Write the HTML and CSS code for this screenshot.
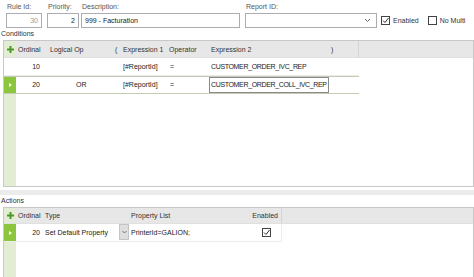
FILE: index.html
```html
<!DOCTYPE html>
<html lang="en">
<head>
  <meta charset="UTF-8">
  <title>Rule Editor</title>
  <link rel="stylesheet" href="styles.css">
</head>
<body>

<div class="top">
  <div class="field rule">
    <label>Rule Id:</label>
    <div class="box num dim">30</div>
  </div>
  <div class="field prio">
    <label>Priority:</label>
    <div class="box num">2</div>
  </div>
  <div class="field desc">
    <label>Description:</label>
    <div class="box">999 - Facturation</div>
  </div>
  <div class="field report">
    <label>Report ID:</label>
    <div class="box combo">
      <svg class="chev" width="7" height="5" viewBox="0 0 7 5"><path d="M1 1 L3.5 3.5 L6 1" fill="none" stroke="#666" stroke-width="1"/></svg>
    </div>
  </div>
  <div class="check">
    <span class="cb">
      <svg width="7" height="7" viewBox="0 0 7 7"><path d="M1 3.5 L3 5.5 L6.5 1" fill="none" stroke="#333" stroke-width="1"/></svg>
    </span>
    Enabled
  </div>
  <div class="check nomulti">
    <span class="cb"></span>
    No Multi
  </div>
</div>

<div class="section-label">Conditions</div>

<div class="grid cond">
  <div class="row head">
    <div class="ind">
      <svg class="plus" width="7" height="7" viewBox="0 0 7 7"><path d="M3.5 0 V7 M0 3.5 H7" stroke="#4b9a2b" stroke-width="2"/></svg>
    </div>
    <div class="c-ord">Ordinal</div>
    <div class="c-log">Logical Op</div>
    <div class="c-par">(</div>
    <div class="c-ex1">Expression 1</div>
    <div class="c-op">Operator</div>
    <div class="c-ex2">Expression 2</div>
    <div class="c-cls">)</div>
    <div class="c-rest"></div>
  </div>
  <div class="row">
    <div class="ind"></div>
    <div class="c-ord num">10</div>
    <div class="c-log"></div>
    <div class="c-par"></div>
    <div class="c-ex1">[#ReportId]</div>
    <div class="c-op">=</div>
    <div class="c-ex2 caps">CUSTOMER_ORDER_IVC_REP</div>
    <div class="c-cls"></div>
  </div>
  <div class="row sel">
    <div class="ind"><span class="arrow"></span></div>
    <div class="c-ord num">20</div>
    <div class="c-log or">OR</div>
    <div class="c-par"></div>
    <div class="c-ex1">[#ReportId]</div>
    <div class="c-op">=</div>
    <div class="c-ex2"><span class="editor caps">CUSTOMER_ORDER_COLL_IVC_REP</span></div>
    <div class="c-cls"></div>
  </div>
</div>

<div class="splitter"></div>
<div class="section-label actions-label">Actions</div>

<div class="grid act">
  <div class="row head">
    <div class="ind">
      <svg class="plus" width="7" height="7" viewBox="0 0 7 7"><path d="M3.5 0 V7 M0 3.5 H7" stroke="#4b9a2b" stroke-width="2"/></svg>
    </div>
    <div class="c-ord">Ordinal</div>
    <div class="c-type">Type</div>
    <div class="c-prop">Property List</div>
    <div class="c-en">Enabled</div>
    <div class="c-rest"></div>
  </div>
  <div class="row sel">
    <div class="ind"><span class="arrow"></span></div>
    <div class="c-ord num">20</div>
    <div class="c-type">
      <span>Set Default Property</span>
      <span class="drop">
        <svg width="5" height="4" viewBox="0 0 5 4"><path d="M0.5 1 L2.5 3 L4.5 1" fill="none" stroke="#666" stroke-width="0.9"/></svg>
      </span>
    </div>
    <div class="c-prop">PrinterId=GALION;</div>
    <div class="c-en">
      <span class="cb">
        <svg width="7" height="7" viewBox="0 0 7 7"><path d="M1 3.5 L3 5.5 L6.5 1" fill="none" stroke="#333" stroke-width="1"/></svg>
      </span>
    </div>
  </div>
</div>

</body>
</html>
```

FILE: styles.css
```css
* {
  box-sizing: border-box;
}

body {
  margin: 0;
  width: 474px;
  height: 277px;
  overflow: hidden;
  background: #fff;
  font-family: 'Liberation Sans', Arial, sans-serif;
  font-size: 7px;
  color: #222;
}

/* header fields */

.top {
  display: flex;
  align-items: flex-end;
  padding: 2px 0 0 6px;
  height: 28px;
}

.field {
  display: flex;
  flex-direction: column;
  gap: 2px;
}

.field label {
  color: #555;
  line-height: 9px;
  padding-left: 1px;
}

.box {
  height: 15px;
  border: 1px solid #abadb3;
  background: #fff;
  line-height: 13px;
  padding: 0 3px;
  color: #222;
}

.box.num {
  text-align: right;
}

.box.dim {
  color: #999;
}

.rule { width: 36px; margin-right: 5px; }
.prio { width: 32px; margin-right: 2px; }
.desc { width: 159px; margin-right: 5px; }
.report { width: 132px; margin-right: 4px; }

.combo {
  display: flex;
  justify-content: flex-end;
  align-items: center;
  padding-right: 5px;
}

.check {
  display: flex;
  align-items: center;
  gap: 3px;
  height: 15px;
  color: #333;
}

.nomulti {
  margin-left: 9px;
}

.cb {
  width: 9px;
  height: 9px;
  border: 1px solid #444;
  background: #fff;
  display: flex;
  align-items: center;
  justify-content: center;
}

.section-label {
  height: 12px;
  line-height: 12px;
  padding-left: 1px;
  color: #333;
}

/* grids */

.grid {
  margin-left: 3px;
  width: 471px;
  border: 1px solid #c8c8c8;
  background: linear-gradient(to right, #e2edd3 12px, #fff 12px);
}

.cond {
  height: 147px;
}

.act {
  height: 80px;
  border-bottom: none;
}

.row {
  display: grid;
  height: 18px;
  line-height: 18px;
  white-space: nowrap;
}

.row > div {
  overflow: hidden;
}

.cond .row {
  grid-template-columns: 12px 27px 69px 8px 46px 42px 121px 30px;
  width: 355px;
}

.act .row {
  grid-template-columns: 12px 27px 86px 121px 32px;
  width: 278px;
}

.row.head {
  width: auto;
  height: 16px;
  line-height: 16px;
  background: #e7e7e7;
  color: #333;
  border-bottom: 1px solid #e0e0e0;
}

.cond .row.head {
  grid-template-columns: 12px 27px 69px 8px 46px 42px 121px 30px 1fr;
  height: 17px;
  line-height: 17px;
}

.act .row.head {
  grid-template-columns: 12px 27px 86px 121px 32px 1fr;
}

.row.head .ind {
  background: #e2edd3;
  display: flex;
  align-items: center;
  justify-content: center;
}

.row.head .c-cls {
  border-right: 1px solid #d4d4d4;
}

.row.head .c-en {
  border-right: 1px solid #d4d4d4;
  text-align: right;
  padding-right: 3px;
}

.row {
  background-clip: padding-box;
}

.cond .row:not(.head) {
  background: #fff;
  border-bottom: 1px solid #ececec;
}

.row.sel {
  border-top: 1px solid #c3ccb2;
  border-bottom: 1px solid #c3ccb2;
  background: #fff;
  line-height: 16px;
}

.cond .row.sel {
  border-bottom: 1px solid #c3ccb2;
}

.row.sel .ind {
  background: #8cc63f;
  display: flex;
  align-items: center;
  justify-content: center;
}

.arrow {
  width: 0;
  height: 0;
  border-left: 3px solid #fff;
  border-top: 2px solid transparent;
  border-bottom: 2px solid transparent;
}

.c-ord { padding-left: 2px; }
.c-ord.num { text-align: right; padding-right: 3px; }
.c-log { padding-left: 7px; }
.c-log.or { padding-left: 33px; }
.c-par { padding-left: 3px; }
.c-ex1 { padding-left: 3px; }
.c-op { padding-left: 3px; }
.row:not(.head) .c-op { padding-left: 4px; }
.c-ex2 { padding-left: 3px; }
.c-cls { padding-left: 2px; }

.caps {
  letter-spacing: -0.35px;
}

.row.sel .c-ex2 {
  padding: 0 0 0 1px;
}

.editor {
  display: block;
  height: 16px;
  border: 1px solid #8a8a8a;
  line-height: 14px;
  padding-left: 1px;
  background: #fff;
}

.c-type {
  display: flex;
  justify-content: space-between;
  padding-left: 2px;
}

.drop {
  width: 10px;
  height: 16px;
  background: #dedede;
  border: 1px solid #c4c4c4;
  display: flex;
  align-items: center;
  justify-content: center;
}

.c-prop { padding-left: 2px; }

.act .row.sel .c-en {
  display: flex;
  align-items: center;
  justify-content: center;
  padding-left: 1px;
}

.act .row.sel {
  border-top: none;
  border-bottom: 1px solid #ececec;
  border-right: 1px solid #ececec;
  line-height: 17px;
}

.splitter {
  height: 5px;
  margin-top: 3px;
  background: #ececec;
}

.actions-label {
  height: 12px;
}
```
